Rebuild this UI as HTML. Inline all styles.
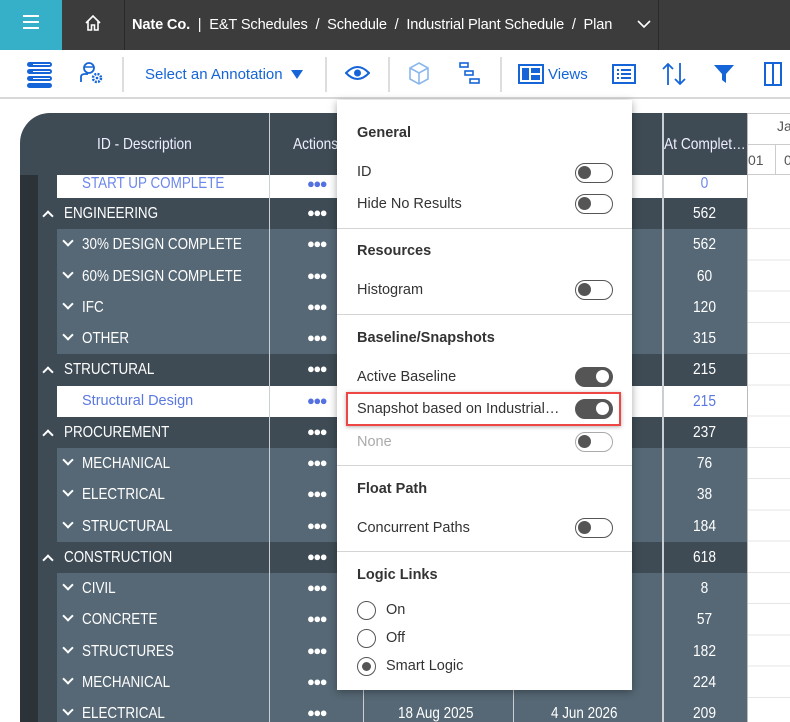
<!DOCTYPE html>
<html><head><meta charset="utf-8"><style>
*{margin:0;padding:0;box-sizing:border-box}
html,body{width:790px;height:722px;overflow:hidden}
body{background:#fff;font-family:"Liberation Sans",sans-serif;position:relative}
.a{position:absolute}
.top{left:0;top:0;width:790px;height:50px;background:#3c3c3c}
.tb{color:#fff;font-size:14.6px;white-space:nowrap}
.row{position:absolute;left:0;width:748px;height:31.25px}
.t{position:absolute;top:0;line-height:31px;font-size:16px;color:#fff;white-space:nowrap;transform:scaleX(0.84);transform-origin:left center}
.dots{position:absolute;left:307px;top:0;line-height:29px;color:#fff;font-size:13px;letter-spacing:-1.5px;font-weight:bold}
.v{position:absolute;left:662px;width:85px;text-align:center;top:0;line-height:31px;font-size:16px;color:#fff;transform:scaleX(0.86)}
.chev{position:absolute;top:11px;width:8px;height:8px;border-left:2px solid #fff;border-top:2px solid #fff}
.dn{transform:rotate(225deg)}
.up{transform:rotate(45deg);top:14px}
.dd{font-size:14.5px;color:#333}
.h{font-weight:bold;font-size:14.5px;color:#333}
.tg{position:absolute;left:575px;width:38px;height:20px;border-radius:10px;border:1.5px solid #555;background:#fff}
.tg::after{content:"";position:absolute;left:2px;top:2px;width:13px;height:13px;border-radius:50%;background:#555}
.tg.on{background:#555}
.tg.on::after{left:auto;right:3px;background:#fff}
.hr{position:absolute;left:337px;width:295px;height:1px;background:#d4d4d4}
.rad{position:absolute;left:357px;width:19px;height:19px;border-radius:50%;border:1.5px solid #555}
.hd{position:absolute;color:#eef;font-size:16px;white-space:nowrap;transform:scaleX(0.86);transform-origin:left center}
</style></head><body>
<div class="a top"></div>
<div class="a" style="left:0;top:0;width:62px;height:50px;background:#36afc8"></div>
<div class="a" style="left:23px;top:15px;width:16px;height:2px;background:#fff;box-shadow:0 6px 0 #fff,0 12px 0 #fff"></div>
<svg class="a" style="left:84px;top:14px" width="18" height="18" viewBox="0 0 18 18"><path d="M2 9 L9 2 L16 9 M4 7.5 V16 H7.5 V11 H10.5 V16 H14 V7.5" fill="none" stroke="#fff" stroke-width="1.6"/></svg>
<div class="a" style="left:124px;top:0;width:1px;height:50px;background:#2a2a2a"></div>
<div class="a tb" style="left:132px;top:17px;letter-spacing:-0.15px"><b>Nate Co.</b> &nbsp;|&nbsp; E&amp;T Schedules &nbsp;/&nbsp; Schedule &nbsp;/&nbsp; Industrial Plant Schedule &nbsp;/&nbsp; Plan</div>
<svg class="a" style="left:637px;top:19px" width="14" height="10"><path d="M1 2 L7 8 L13 2" fill="none" stroke="#fff" stroke-width="1.6"/></svg>
<div class="a" style="left:658px;top:0;width:1px;height:50px;background:#2a2a2a"></div>
<!-- toolbar -->
<div class="a" style="left:0;top:97px;width:790px;height:2px;background:#d8d8d8"></div>
<svg class="a" style="left:27px;top:62px" width="27" height="26"><g fill="#1565d8"><rect x="0" y="0" width="25" height="5" rx="2.5"/><rect x="0" y="7" width="25" height="5" rx="2.5"/><rect x="0" y="14" width="25" height="5" rx="2.5"/><rect x="0" y="21" width="25" height="5" rx="2.5"/></g><g fill="#fff"><rect x="6" y="2" width="17" height="1"/><rect x="6" y="9" width="17" height="1"/><rect x="6" y="16" width="17" height="1"/></g></svg>
<svg class="a" style="left:80px;top:61px" width="24" height="24"><circle cx="9" cy="7" r="5" fill="none" stroke="#1565d8" stroke-width="1.8"/><path d="M4 6 H14" stroke="#1565d8" stroke-width="1.5"/><path d="M1 21 V16 Q1 13 5 13 H8" fill="none" stroke="#1565d8" stroke-width="1.8"/><circle cx="17" cy="17" r="4" fill="none" stroke="#1565d8" stroke-width="2.5" stroke-dasharray="2 1.2"/><circle cx="17" cy="17" r="1.3" fill="#1565d8"/></svg>
<div class="a" style="left:122px;top:57px;width:2px;height:35px;background:#ddd"></div>
<div class="a" style="left:145px;top:66px;font-size:15px;color:#1565d8">Select an Annotation</div>
<div class="a" style="left:291px;top:70px;width:0;height:0;border-left:6px solid transparent;border-right:6px solid transparent;border-top:9px solid #1565d8"></div>
<div class="a" style="left:325px;top:57px;width:2px;height:35px;background:#ddd"></div>
<svg class="a" style="left:345px;top:64px" width="25" height="18"><path d="M1 9 Q12.5 -3 24 9 Q12.5 21 1 9Z" fill="none" stroke="#1565d8" stroke-width="2"/><circle cx="12.5" cy="9" r="3.5" fill="#1565d8"/></svg>
<div class="a" style="left:388px;top:57px;width:2px;height:35px;background:#ddd"></div>
<div class="a" style="left:500px;top:57px;width:2px;height:35px;background:#ddd"></div>
<svg class="a" style="left:518px;top:64px" width="26" height="20"><rect x="1" y="1" width="24" height="18" fill="none" stroke="#1565d8" stroke-width="2"/><rect x="4" y="4" width="7" height="12" fill="#1565d8"/><rect x="13" y="4" width="9" height="5" fill="#1565d8"/><rect x="13" y="11" width="9" height="5" fill="#1565d8"/></svg>
<div class="a" style="left:548px;top:66px;font-size:15px;color:#1565d8">Views</div>
<svg class="a" style="left:612px;top:64px" width="24" height="20"><rect x="1" y="1" width="22" height="18" fill="none" stroke="#1565d8" stroke-width="2"/><g fill="#1565d8"><rect x="5" y="5" width="2" height="2"/><rect x="9" y="5" width="10" height="2"/><rect x="5" y="9" width="2" height="2"/><rect x="9" y="9" width="10" height="2"/><rect x="5" y="13" width="2" height="2"/><rect x="9" y="13" width="10" height="2"/></g></svg>
<svg class="a" style="left:661px;top:62px" width="26" height="24"><path d="M7 23 V2 M2 7 L7 2 L12 7 M19 1 V22 M14 17 L19 22 L24 17" fill="none" stroke="#1565d8" stroke-width="1.8"/></svg>
<svg class="a" style="left:713px;top:64px" width="22" height="20"><path d="M1 1 H21 L13 10 V19 L9 16 V10 Z" fill="#1565d8"/></svg>
<svg class="a" style="left:764px;top:62px" width="18" height="24"><rect x="1" y="1" width="16" height="22" fill="none" stroke="#1565d8" stroke-width="2"/><path d="M9 1 V23" stroke="#1565d8" stroke-width="2"/></svg>
<svg class="a" style="left:408px;top:62px" width="22" height="24"><path d="M11 1 L20 6 V17 L11 22 L2 17 V6 Z M2 6 L11 11 L20 6 M11 11 V22" fill="none" stroke="#8ab8ec" stroke-width="1.6"/></svg>
<svg class="a" style="left:459px;top:62px" width="22" height="22"><g fill="none" stroke="#1565d8" stroke-width="1.6"><rect x="1" y="1" width="8" height="4"/><rect x="6" y="9" width="8" height="4"/><rect x="11" y="17" width="9" height="4"/></g></svg>

<!-- table -->
<div class="a" style="left:20px;top:113px;width:728px;height:62px;background:#3e4b55;border-top-left-radius:30px"></div>
<div class="a" style="left:20px;top:175px;width:18px;height:547px;background:#2b3339"></div>
<div class="a" style="left:38px;top:175px;width:19px;height:547px;background:#3e4b55"></div>
<div class="hd" style="left:97px;top:136px">ID - Description</div>
<div class="hd" style="left:293px;top:136px">Actions</div>
<div class="hd" style="left:664px;top:136px">At Complet…</div>
<div class="a" style="left:748px;top:113px;width:42px;height:62px;background:#fff;border-top:1px solid #ccc;border-bottom:1px solid #ccc"></div>
<div class="a" style="left:748px;top:144px;width:42px;height:1px;background:#ccc"></div>
<div class="a" style="left:777px;top:118px;font-size:14px;color:#555">Ja</div>
<div class="a" style="left:748px;top:152px;font-size:14px;color:#555">01</div>
<div class="a" style="left:775px;top:144px;width:1px;height:31px;background:#ccc"></div>
<div class="a" style="left:784px;top:152px;font-size:14px;color:#555">0</div>

<div class="a" style="left:748px;top:198px;width:42px;height:524px;background:repeating-linear-gradient(to bottom,#fff 0,#fff 30.25px,#e6e6e6 30.25px,#e6e6e6 31.25px)"></div>
<div id="rows">
<div class="row" style="top:175px;height:23px"><div class="a" style="left:57px;width:691px;height:23px;background:#fff"></div><div class="t" style="left:82px;line-height:17px;color:#6c87ea">START UP COMPLETE</div><div class="dots" style="line-height:17px;color:#5570e0">●●●</div><div class="v" style="line-height:17px;color:#6c87ea">0</div></div>
<div class="row" style="top:198px"><div class="a" style="left:38px;width:710px;height:100%;background:#3e4b55"></div><div class="chev up" style="left:44px"></div><div class="t" style="left:64px">ENGINEERING</div><div class="dots">●●●</div><div class="v">562</div></div>
<div class="row" style="top:229.25px"><div class="a" style="left:57px;width:691px;height:100%;background:#566875"></div><div class="chev dn" style="left:64px;top:8px"></div><div class="t" style="left:82px">30% DESIGN COMPLETE</div><div class="dots">●●●</div><div class="v">562</div></div>
<div class="row" style="top:260.5px"><div class="a" style="left:57px;width:691px;height:100%;background:#566875"></div><div class="chev dn" style="left:64px;top:8px"></div><div class="t" style="left:82px">60% DESIGN COMPLETE</div><div class="dots">●●●</div><div class="v">60</div></div>
<div class="row" style="top:291.75px"><div class="a" style="left:57px;width:691px;height:100%;background:#566875"></div><div class="chev dn" style="left:64px;top:8px"></div><div class="t" style="left:82px">IFC</div><div class="dots">●●●</div><div class="v">120</div></div>
<div class="row" style="top:323px"><div class="a" style="left:57px;width:691px;height:100%;background:#566875"></div><div class="chev dn" style="left:64px;top:8px"></div><div class="t" style="left:82px">OTHER</div><div class="dots">●●●</div><div class="v">315</div></div>
<div class="row" style="top:354.25px"><div class="a" style="left:38px;width:710px;height:100%;background:#3e4b55"></div><div class="chev up" style="left:44px"></div><div class="t" style="left:64px">STRUCTURAL</div><div class="dots">●●●</div><div class="v">215</div></div>
<div class="row" style="top:385.5px"><div class="a" style="left:57px;width:691px;height:100%;background:#fff"></div><div class="t" style="left:82px;color:#5a78e0;transform:none;font-size:14.5px">Structural Design</div><div class="dots" style="color:#5570e0">●●●</div><div class="v" style="color:#5a78e0">215</div></div>
<div class="row" style="top:416.75px"><div class="a" style="left:38px;width:710px;height:100%;background:#3e4b55"></div><div class="chev up" style="left:44px"></div><div class="t" style="left:64px">PROCUREMENT</div><div class="dots">●●●</div><div class="v">237</div></div>
<div class="row" style="top:448px"><div class="a" style="left:57px;width:691px;height:100%;background:#566875"></div><div class="chev dn" style="left:64px;top:8px"></div><div class="t" style="left:82px">MECHANICAL</div><div class="dots">●●●</div><div class="v">76</div></div>
<div class="row" style="top:479.25px"><div class="a" style="left:57px;width:691px;height:100%;background:#566875"></div><div class="chev dn" style="left:64px;top:8px"></div><div class="t" style="left:82px">ELECTRICAL</div><div class="dots">●●●</div><div class="v">38</div></div>
<div class="row" style="top:510.5px"><div class="a" style="left:57px;width:691px;height:100%;background:#566875"></div><div class="chev dn" style="left:64px;top:8px"></div><div class="t" style="left:82px">STRUCTURAL</div><div class="dots">●●●</div><div class="v">184</div></div>
<div class="row" style="top:541.75px"><div class="a" style="left:38px;width:710px;height:100%;background:#3e4b55"></div><div class="chev up" style="left:44px"></div><div class="t" style="left:64px">CONSTRUCTION</div><div class="dots">●●●</div><div class="v">618</div></div>
<div class="row" style="top:573px"><div class="a" style="left:57px;width:691px;height:100%;background:#566875"></div><div class="chev dn" style="left:64px;top:8px"></div><div class="t" style="left:82px">CIVIL</div><div class="dots">●●●</div><div class="v">8</div></div>
<div class="row" style="top:604.25px"><div class="a" style="left:57px;width:691px;height:100%;background:#566875"></div><div class="chev dn" style="left:64px;top:8px"></div><div class="t" style="left:82px">CONCRETE</div><div class="dots">●●●</div><div class="v">57</div></div>
<div class="row" style="top:635.5px"><div class="a" style="left:57px;width:691px;height:100%;background:#566875"></div><div class="chev dn" style="left:64px;top:8px"></div><div class="t" style="left:82px">STRUCTURES</div><div class="dots">●●●</div><div class="v">182</div></div>
<div class="row" style="top:666.75px"><div class="a" style="left:57px;width:691px;height:100%;background:#566875"></div><div class="chev dn" style="left:64px;top:8px"></div><div class="t" style="left:82px">MECHANICAL</div><div class="dots">●●●</div><div class="v">224</div></div>
<div class="row" style="top:698px;height:24px"><div class="a" style="left:57px;width:691px;height:100%;background:#566875"></div><div class="chev dn" style="left:64px;top:8px"></div><div class="t" style="left:82px">ELECTRICAL</div><div class="dots">●●●</div><div class="t" style="left:398px">18 Aug 2025</div><div class="t" style="left:551px">4 Jun 2026</div><div class="v">209</div></div>
</div>
<!-- column lines -->
<div class="a" style="left:269px;top:113px;width:1px;height:609px;background:#c9cfd3"></div>
<div class="a" style="left:363px;top:113px;width:1px;height:609px;background:#c9cfd3"></div>
<div class="a" style="left:513px;top:113px;width:1px;height:609px;background:#c9cfd3"></div>
<div class="a" style="left:662px;top:113px;width:2px;height:609px;background:#c9cfd3"></div>
<div class="a" style="left:747px;top:113px;width:1px;height:609px;background:#bbb"></div>

<!-- dropdown -->
<div class="a" style="left:337px;top:100px;width:295px;height:590px;background:#fff;box-shadow:0 2px 8px rgba(0,0,0,.35)"></div>
<div class="a h" style="left:357px;top:125px">General</div>
<div class="a dd" style="left:357px;top:164px">ID</div><div class="tg" style="top:163px"></div>
<div class="a dd" style="left:357px;top:196px">Hide No Results</div><div class="tg" style="top:194px"></div>
<div class="hr" style="top:228px"></div>
<div class="a h" style="left:357px;top:243px">Resources</div>
<div class="a dd" style="left:357px;top:282px">Histogram</div><div class="tg" style="top:280px"></div>
<div class="hr" style="top:314px"></div>
<div class="a h" style="left:357px;top:330px">Baseline/Snapshots</div>
<div class="a dd" style="left:357px;top:369px">Active Baseline</div><div class="tg on" style="top:367px"></div>
<div class="a" style="left:346px;top:392px;width:275px;height:34px;border:2px solid #ee4545;box-shadow:0 1px 4px rgba(0,0,0,.3)"></div>
<div class="a dd" style="left:357px;top:401px">Snapshot based on Industrial…</div><div class="tg on" style="top:399px"></div>
<div class="a dd" style="left:357px;top:434px;color:#aaa">None</div><div class="tg" style="top:432px;border-color:#aaa"></div>
<div class="hr" style="top:465px"></div>
<div class="a h" style="left:357px;top:481px">Float Path</div>
<div class="a dd" style="left:357px;top:520px">Concurrent Paths</div><div class="tg" style="top:518px"></div>
<div class="hr" style="top:551px"></div>
<div class="a h" style="left:357px;top:567px">Logic Links</div>
<div class="rad" style="top:601px"></div><div class="a dd" style="left:386px;top:602px">On</div>
<div class="rad" style="top:629px"></div><div class="a dd" style="left:386px;top:630px">Off</div>
<div class="rad" style="top:657px"></div><div class="a" style="left:362px;top:662px;width:9px;height:9px;border-radius:50%;background:#555"></div><div class="a dd" style="left:386px;top:658px">Smart Logic</div>
</body></html>
